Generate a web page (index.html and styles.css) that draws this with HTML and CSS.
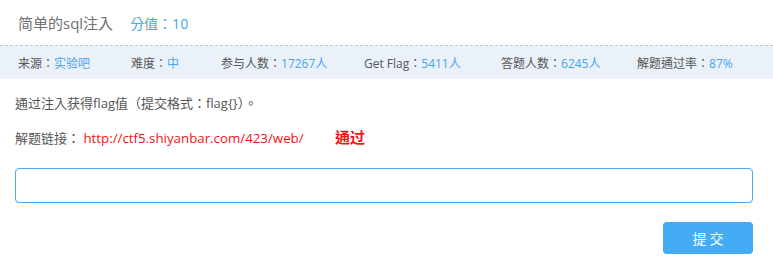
FILE: index.html
```html
<!DOCTYPE html>
<html lang="zh-CN">
<head>
  <meta charset="UTF-8">
  <title>简单的sql注入</title>
  <link rel="stylesheet" href="styles.css">
</head>
<body>

  <div class="head">
    <span class="title">简单的sql注入</span>
    <span class="score">分值：10</span>
  </div>

  <div class="info">
    <span class="item item-src">来源：<em>实验吧</em></span>
    <span class="item item-lv">难度：<em>中</em></span>
    <span class="item item-join">参与人数：<em>17267人</em></span>
    <span class="item item-flag">Get Flag：<em>5411人</em></span>
    <span class="item item-ans">答题人数：<em>6245人</em></span>
    <span class="item">解题通过率：<em>87%</em></span>
  </div>

  <div class="content">
    <p class="desc">通过注入获得flag值（提交格式：flag{}）。</p>
    <p class="link-row">
      解题链接：
      <a class="link" href="#">http://ctf5.shiyanbar.com/423/web/</a>
      <span class="pass">通过</span>
    </p>

    <input class="answer" type="text">

    <div class="actions">
      <button class="submit-btn">提 交</button>
    </div>
  </div>

</body>
</html>
```

FILE: styles.css
```css
html, body {
  margin: 0;
  padding: 0;
  background-color: white;
  font-family: "Open Sans", "Noto Sans CJK TC", sans-serif;
  font-feature-settings: "locl" 0;
  color: #555;
}

.head {
  height: 45px;
  display: flex;
  align-items: center;
  padding-left: 18px;
}

.title {
  font-size: 15px;
  color: #707070;
}

.score {
  font-size: 14px;
  color: #48a4ef;
  margin-left: 17px;
}

.info {
  height: 33px;
  display: flex;
  align-items: center;
  padding-left: 18px;
  background-color: #eaf1f8;
  border-top: 1px dashed #c8c8c8;
  font-size: 12px;
  color: #555;
}

.item em {
  font-style: normal;
  color: #48a4ef;
}

.item-src { width: 113px; }
.item-lv { width: 90px; }
.item-join { width: 143px; }
.item-flag { width: 137px; }
.item-ans { width: 136px; }

.content {
  padding: 0 20px 0 15px;
}

.desc {
  margin: 14px 0 0;
  font-size: 13px;
  line-height: 20px;
}

.link-row {
  margin: 14px 0 0;
  font-size: 13px;
  line-height: 20px;
}

.link {
  color: #f01515;
  text-decoration: none;
  font-size: 13.3px;
}

.pass {
  color: #f01515;
  font-weight: bold;
  font-size: 15px;
  margin-left: 28px;
}

.answer {
  display: block;
  box-sizing: border-box;
  width: 100%;
  height: 35px;
  margin-top: 20px;
  border: 1px solid #48aaf3;
  border-radius: 4px;
  outline: none;
}

.actions {
  display: flex;
  justify-content: flex-end;
  margin-top: 19px;
}

.submit-btn {
  width: 90px;
  height: 32px;
  border: none;
  border-radius: 4px;
  background-color: #44acf5;
  color: white;
  font-family: "Noto Sans CJK SC", sans-serif;
  font-size: 14px;
  cursor: pointer;
}
```
